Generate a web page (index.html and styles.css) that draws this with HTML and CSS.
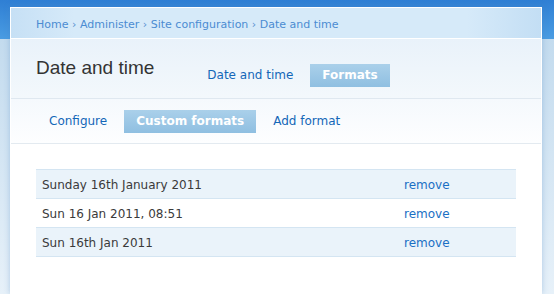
FILE: index.html
```html
<!DOCTYPE html>
<html lang="en">
<head>
    <meta charset="UTF-8">
    <title>Date and time</title>
    <link rel="stylesheet" href="styles.css">
</head>
<body>
    <div class="page">
        <div class="breadcrumb">
            <a href="#">Home</a> › <a href="#">Administer</a> › <a href="#">Site configuration</a> › <a href="#">Date and time</a>
        </div>

        <div class="header">
            <h1>Date and time</h1>
            <ul class="tabs">
                <li><a href="#">Date and time</a></li>
                <li class="active"><a href="#">Formats</a></li>
            </ul>
        </div>

        <ul class="subtabs">
            <li><a href="#">Configure</a></li>
            <li class="active"><a href="#">Custom formats</a></li>
            <li><a href="#">Add format</a></li>
        </ul>

        <div class="content">
            <table class="formats">
                <tr class="odd">
                    <td>Sunday 16th January 2011</td>
                    <td><a href="#">remove</a></td>
                </tr>
                <tr class="even">
                    <td>Sun 16 Jan 2011, 08:51</td>
                    <td><a href="#">remove</a></td>
                </tr>
                <tr class="odd">
                    <td>Sun 16th Jan 2011</td>
                    <td><a href="#">remove</a></td>
                </tr>
            </table>
        </div>
    </div>
</body>
</html>
```

FILE: styles.css
```css
html, body {
    height: 100%;
}
body {
    margin: 0;
    font-family: "DejaVu Sans", Verdana, sans-serif;
    font-size: 12px;
    color: #3a3a3a;
    background: linear-gradient(to bottom, #2f7fd4 0, #4a9ce2 39px, #c3dbee 39px, #e7f1f9 100%);
    overflow: hidden;
}
a {
    text-decoration: none;
}
ul {
    list-style: none;
    margin: 0;
    padding: 0;
}
.page {
    margin: 7px 0 0 10px;
    width: 530px;
    height: 286px;
    border: 1px solid #ffffff;
    border-bottom: 0;
    background: #ffffff;
    box-shadow: 0 0 6px rgba(70, 130, 190, 0.35);
}
.breadcrumb {
    height: 28px;
    padding-top: 2px;
    line-height: 30px;
    padding-left: 25px;
    font-size: 11px;
    color: #5a93d2;
    background: linear-gradient(to right, #c6e0f5, #d6eaf9 12%, #d6eaf9 86%, #c3def4);
    border-bottom: 1px solid #ffffff;
}
.breadcrumb a {
    color: #4b8cd2;
}
.header {
    display: flex;
    align-items: flex-start;
    height: 41px;
    padding: 18px 0 0 25px;
    background: linear-gradient(#e9f2fa, #f3f8fc);
    border-bottom: 1px solid #dfe8f0;
}
.header h1 {
    margin: 0;
    font-family: "Liberation Sans", Arial, sans-serif;
    font-size: 19px;
    line-height: 22px;
    font-weight: normal;
    color: #333333;
}
.tabs {
    display: flex;
    margin: 7px 0 0 42px;
    gap: 6px;
}
.tabs a, .subtabs a {
    display: block;
    height: 23px;
    line-height: 23px;
    padding: 0 11px;
    color: #1467b8;
}
.tabs .active a, .subtabs .active a {
    padding: 0 12px;
    color: #ffffff;
    font-weight: bold;
    background: linear-gradient(#aad0ea, #8fbfe1);
}
.subtabs {
    display: flex;
    gap: 6px;
    padding: 11px 0 10px 27px;
    background: linear-gradient(#f5f9fd, #fdfeff);
    border-bottom: 1px solid #e3eaf0;
}
.content {
    padding: 25px 0 0 25px;
}
.formats {
    width: 480px;
    border-collapse: collapse;
    border-top: 1px solid #d4e5f2;
}
.formats td {
    height: 14px;
    line-height: 14px;
    padding: 8px 6px 6px;
    border-bottom: 1px solid #d4e5f2;
}
.formats td:first-child {
    width: 350px;
}
.formats .odd {
    background-color: #eaf3fa;
}
.formats a {
    color: #1a6fc4;
}
```
